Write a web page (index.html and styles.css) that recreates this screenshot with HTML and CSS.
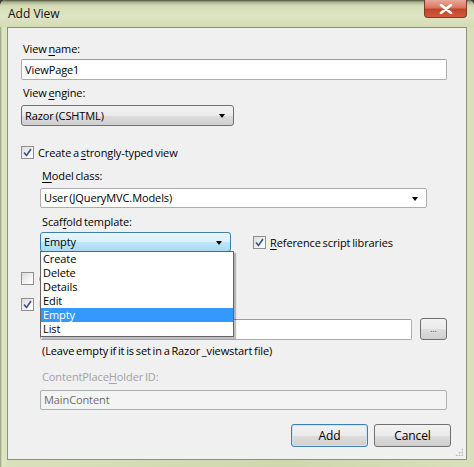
FILE: index.html
```html
<!DOCTYPE html>
<html lang="en">
<head>
    <meta charset="UTF-8">
    <meta name="viewport" content="width=device-width, initial-scale=1.0">
    <title>Add View</title>
    <link rel="stylesheet" href="styles.css">
</head>
<body>
    <div class="window">
        <div class="titlebar">
            <span class="title">Add View</span>
            <div class="close-btn">
                <svg width="14" height="10" viewBox="0 0 14 10"><path d="M2 1 L12 9 M12 1 L2 9" stroke="#fff" stroke-width="2.6" stroke-linecap="round"/></svg>
            </div>
        </div>
        <div class="client">
            <div class="label first">View <u>n</u>ame:</div>
            <div class="textbox name">ViewPage1</div>
            <div class="label gap5">View <u>e</u>ngine:</div>
            <div class="select engine">Razor (CSHTML)<span class="arrow"></span></div>

            <div class="check-row typed">
                <span class="checkbox"><svg width="9" height="9" viewBox="0 0 9 9"><path d="M1 4.5 L3.5 7.5 L8 1" fill="none" stroke="#3b5287" stroke-width="1.6"/></svg></span>
                <span>Create a <u>s</u>trongly-typed view</span>
            </div>

            <div class="indent">
                <div class="label model"><u>M</u>odel class:</div>
                <div class="select combo model-select">User (JQueryMVC.Models)<span class="arrow"></span></div>
                <div class="label scaffold">Scaf<u>f</u>old template:</div>
                <div class="scaffold-row">
                    <div class="select-wrap">
                        <div class="select focused">Empty<span class="arrow"></span></div>
                        <ul class="dropdown">
                            <li>Create</li>
                            <li>Delete</li>
                            <li>Details</li>
                            <li>Edit</li>
                            <li class="selected">Empty</li>
                            <li>List</li>
                        </ul>
                    </div>
                    <div class="check-row ref">
                        <span class="checkbox"><svg width="9" height="9" viewBox="0 0 9 9"><path d="M1 4.5 L3.5 7.5 L8 1" fill="none" stroke="#3b5287" stroke-width="1.6"/></svg></span>
                        <span><u>R</u>eference script libraries</span>
                    </div>
                </div>
            </div>

            <!-- these two rows sit under the open dropdown -->
            <div class="check-row partial">
                <span class="checkbox"></span>
                <span class="hidden-label">Create as a partial view</span>
            </div>
            <div class="check-row layout">
                <span class="checkbox"><svg width="9" height="9" viewBox="0 0 9 9"><path d="M1 4.5 L3.5 7.5 L8 1" fill="none" stroke="#3b5287" stroke-width="1.6"/></svg></span>
                <span class="hidden-label">Use a layout or master page:</span>
            </div>

            <div class="indent">
                <div class="browse-row">
                    <div class="textbox master"></div>
                    <div class="button browse">...</div>
                </div>
                <div class="hint">(Leave empty if it is set in a Razor _viewstart file)</div>
                <div class="label disabled">ContentPlace<u>H</u>older ID:</div>
                <div class="textbox disabled-box">MainContent</div>
            </div>

            <div class="buttons">
                <div class="button default">Add</div>
                <div class="button">Cancel</div>
            </div>
            <div class="grip"></div>
        </div>
    </div>
</body>
</html>
```

FILE: styles.css
```css
body {
    margin: 0;
    padding: 0;
    background-color: #3c3f36;
    font-family: "Open Sans", "Noto Sans", sans-serif;
    font-size: 11px;
    letter-spacing: -0.1px;
    word-spacing: -1px;
    color: #000;
    overflow: hidden;
}
u {
    text-decoration-thickness: 1px;
    text-underline-offset: 2px;
}
.window {
    width: 474px;
    height: 467px;
    box-sizing: border-box;
    background: linear-gradient(to right, #8f9878 0, #dfe6c4 2px, #d9e0bb 8px, #cfd7ad 60%, #d8dfba 100%);
    border-radius: 6px 6px 0 0;
    display: flex;
    flex-direction: column;
    position: relative;
}
.titlebar {
    height: 27px;
    display: flex;
    align-items: flex-start;
    justify-content: space-between;
    background: linear-gradient(to bottom, #4a4d40 0, #a9b18d 2px, #d6ddb7 6px, #dde4c3 16px, #d4dbb4 27px);
    border-radius: 6px 6px 0 0;
}
.title {
    padding: 5px 0 0 8px;
    font-size: 12px;
    letter-spacing: 0;
    word-spacing: 0;
    color: #111;
    line-height: 17px;
}
.close-btn {
    width: 43px;
    height: 18px;
    margin-right: 7px;
    box-sizing: border-box;
    border: 1px solid #7a3a2c;
    border-top: none;
    border-radius: 0 0 4px 4px;
    background: linear-gradient(to bottom, #e9a99a 0, #d9765f 45%, #c2432b 55%, #d25a3c 100%);
    display: flex;
    align-items: center;
    justify-content: center;
}
.client {
    margin: 0 7px;
    height: 433px;
    box-sizing: border-box;
    background-color: #f0f0f0;
    border: 1px solid #8b9473;
    padding: 0 19px 0 13px;
    position: relative;
}
.label {
    line-height: 15px;
    height: 15px;
    padding-left: 2px;
    white-space: nowrap;
}
.label.first {
    margin-top: 13px;
    margin-bottom: 3px;
}
.label.gap5 {
    margin-top: 5px;
    margin-bottom: 5px;
}
.label.disabled {
    color: #a3a3a3;
    margin-top: 11px;
    margin-bottom: 6px;
}
.textbox {
    height: 21px;
    box-sizing: border-box;
    background-color: #fff;
    border: 1px solid #abadb3;
    border-top-color: #9a9da4;
    border-radius: 2px;
    padding: 0 3px;
    line-height: 19px;
    white-space: nowrap;
}
.select {
    height: 21px;
    box-sizing: border-box;
    border: 1px solid #707070;
    border-radius: 3px;
    background: linear-gradient(to bottom, #f2f2f2 0, #ebebeb 50%, #dddddd 51%, #cfcfcf 100%);
    padding: 0 3px;
    line-height: 19px;
    position: relative;
    white-space: nowrap;
}
.arrow {
    position: absolute;
    right: 8px;
    top: 8px;
    width: 0;
    height: 0;
    border-left: 3.5px solid transparent;
    border-right: 3.5px solid transparent;
    border-top: 4px solid #000;
}
.engine {
    width: 213px;
}
.combo {
    background: #fff;
    border-color: #abadb3;
    border-radius: 2px;
    height: 20px;
    line-height: 18px;
}
.model-select {
    width: 387px;
}
.focused {
    width: 191px;
    height: 20px;
    line-height: 18px;
    border-color: #3c7fb1;
    background: linear-gradient(to bottom, #eaf6fd 0, #d9f0fc 50%, #bee6fd 51%, #a7d9f5 100%);
}
.check-row {
    display: flex;
    align-items: center;
    height: 15px;
    line-height: 15px;
    white-space: nowrap;
}
.checkbox {
    width: 13px;
    height: 13px;
    box-sizing: border-box;
    border: 1px solid #8e8f8f;
    background: linear-gradient(135deg, #dcdcdc 0, #f4f4f4 60%, #ffffff 100%);
    display: flex;
    align-items: center;
    justify-content: center;
    margin-right: 4px;
    flex-shrink: 0;
}
.check-row.typed {
    margin-top: 19px;
}
.indent {
    margin-left: 19px;
}
.label.model {
    margin-top: 8px;
    margin-bottom: 5px;
}
.label.scaffold {
    margin-top: 6px;
    margin-bottom: 3px;
}
.scaffold-row {
    display: flex;
    align-items: center;
    height: 20px;
}
.select-wrap {
    position: relative;
    width: 191px;
}
.check-row.ref {
    margin-left: 22px;
}
.dropdown {
    position: absolute;
    left: 0;
    top: 19px;
    width: 192px;
    margin: 0;
    padding: 0;
    list-style: none;
    background-color: #fff;
    border: 1px solid #646464;
    box-shadow: 2px 2px 1px rgba(0, 0, 0, 0.25);
    z-index: 10;
}
.dropdown li {
    height: 14px;
    line-height: 14px;
    padding-left: 2px;
}
.dropdown li.selected {
    background-color: #3399ff;
    color: #fff;
}
.check-row.partial {
    margin-top: 19px;
}
.check-row.layout {
    margin-top: 11px;
}
.hidden-label {
    margin-left: 1px;
}
.browse-row {
    display: flex;
    align-items: center;
    margin-top: 6px;
    height: 22px;
}
.textbox.master {
    width: 372px;
}
.button {
    height: 23px;
    box-sizing: border-box;
    border: 1px solid #707070;
    border-radius: 3px;
    background: linear-gradient(to bottom, #f2f2f2 0, #ebebeb 50%, #dddddd 51%, #cfcfcf 100%);
    display: flex;
    align-items: center;
    justify-content: center;
    font-size: 12px;
}
.button.browse {
    width: 27px;
    height: 22px;
    margin-left: 8px;
    font-size: 9px;
    color: #555;
    line-height: 10px;
}
.hint {
    margin-top: 3px;
    height: 15px;
    line-height: 15px;
    padding-left: 2px;
    white-space: nowrap;
}
.disabled-box {
    width: 407px;
    height: 20px;
    line-height: 18px;
    background-color: #f4f4f4;
    border-color: #adb2b5;
    color: #6d6d6d;
}
.buttons {
    display: flex;
    justify-content: flex-end;
    gap: 6px;
    margin-top: 14px;
    margin-right: -4px;
}
.buttons .button {
    width: 77px;
}
.button.default {
    border-color: #3c7fb1;
    box-shadow: inset 0 0 0 1px #c6e6f8;
}
.grip {
    position: absolute;
    right: 3px;
    bottom: 3px;
    width: 8px;
    height: 8px;
    background: radial-gradient(circle, #b9b9b9 0.8px, transparent 1.2px) 0 0 / 3px 3px;
    clip-path: polygon(100% 0, 100% 100%, 0 100%);
}
```
